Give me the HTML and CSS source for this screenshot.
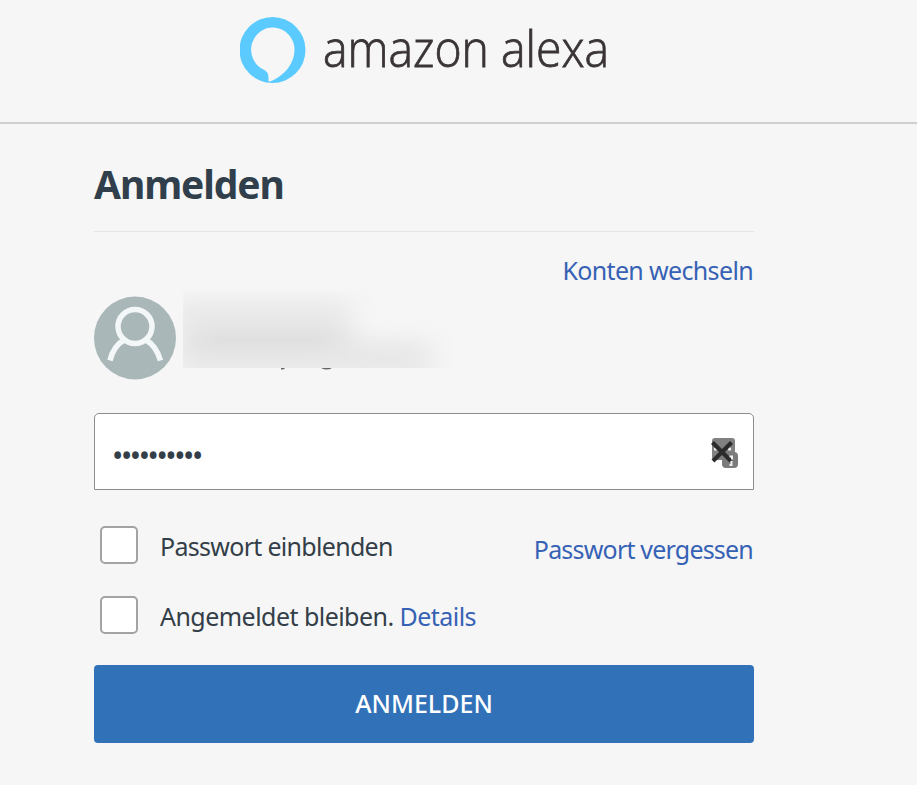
FILE: index.html
```html
<!DOCTYPE html>
<html lang="de">
<head>
    <meta charset="UTF-8">
    <meta name="viewport" content="width=device-width, initial-scale=1.0">
    <title>Amazon Alexa - Anmelden</title>
    <link rel="stylesheet" href="styles.css">
</head>
<body>
    <header class="header">
        <svg class="logo" width="400" height="90" viewBox="0 0 400 90">
            <circle cx="32.5" cy="34" r="33" fill="#5bcbff"/>
            <path class="logo-hole" d="M28.500 65.500 C28.500 59 29 57 23.500 53.500 A21.700 22 0 1 1 54.500 33.500 C54.500 48 44 60 30 65.500 Z"/>
            <text class="logo-text" x="83" y="51" textLength="286" lengthAdjust="spacingAndGlyphs">amazon alexa</text>
        </svg>
    </header>

    <main class="container">
        <h1>Anmelden</h1>
        <div class="switch"><a href="#">Konten wechseln</a></div>

        <div class="account">
            <svg class="avatar" width="82" height="84" viewBox="0 0 82 84">
                <ellipse cx="41" cy="42" rx="41" ry="41.5" fill="#aab7b8"/>
                <g fill="none" stroke="#f3f7f7" stroke-width="5.5">
                    <circle cx="41" cy="30.500" r="17"/>
                    <path d="M16 64.500 C18 56 23 48 30 44 M52 44 C59 48 64 56 66.500 64.500"/>
                </g>
            </svg>
            <!-- hidden account name -->
            <svg class="account-name" width="270" height="82" viewBox="0 0 270 82">
                <defs>
                    <filter id="soft" x="-30%" y="-60%" width="160%" height="220%">
                        <feGaussianBlur stdDeviation="14 10"/>
                    </filter>
                    <clipPath id="area"><rect width="270" height="77"/></clipPath>
                </defs>
                <g clip-path="url(#area)">
                    <g filter="url(#soft)">
                        <rect x="-10" y="8" width="178" height="80" fill="#e9e9e9"/>
                        <rect x="10" y="42" width="160" height="15" fill="#d9d9d9"/>
                        <rect x="150" y="48" width="98" height="42" fill="#e8e8e8"/>
                    </g>
                </g>
                <path d="M98 77 h4 q-1 2 -4 1.500 Z M138 77 h11 q-5 3 -11 0 Z" fill="#666"/>
            </svg>
        </div>

        <form>
            <div class="password">
                <input type="password" value="passwort12" aria-label="Passwort">
                <svg class="manager" width="28" height="32" viewBox="0 0 28 32">
                    <rect x="1" y="1" width="23" height="22" rx="3" fill="#818181"/>
                    <rect x="11" y="15" width="16" height="16" rx="4" fill="#7b7b7b"/>
                    <circle cx="4.500" cy="12" r="1.700" fill="#eee"/>
                    <circle cx="18.500" cy="12" r="1.700" fill="#eee"/>
                    <path d="M1.500 5.500 L20 24 M20.500 5.500 L2 24" stroke="#2b2b2b" stroke-width="4.200"/>
                    <path d="M18.500 19.500 h2.500 v3 M20.500 24 v4 h-2" fill="none" stroke="#eee" stroke-width="2"/>
                </svg>
            </div>

            <div class="row">
                <label class="option"><input type="checkbox"><span class="show">Passwort einblenden</span></label>
                <a class="forgot" href="#">Passwort vergessen</a>
            </div>
            <div class="row">
                <label class="option"><input type="checkbox"><span class="stay">Angemeldet bleiben. <a href="#">Details</a></span></label>
            </div>

            <button type="submit">ANMELDEN</button>
        </form>
    </main>
</body>
</html>
```

FILE: styles.css
```css
* {
    box-sizing: border-box;
}
body {
    margin: 0;
    min-height: 785px;
    background: #f6f6f6;
    color: #333e48;
    font-family: "Noto Sans", sans-serif;
    font-size: 25px;
    line-height: 36px;
    letter-spacing: -0.7px;
}
a {
    color: #3662b5;
    text-decoration: none;
}
svg {
    display: block;
    flex: none;
}
.header {
    height: 124px;
    padding: 16px 0 0 240px;
    border-bottom: 2px solid #cfcfcf;
}
.logo-hole {
    fill: #f6f6f6;
}
.logo-text {
    fill: #3a3436;
    stroke: #3a3436;
    stroke-width: 0.8px;
    font-family: "Open Sans", sans-serif;
    font-size: 50px;
    font-weight: 300;
    letter-spacing: 0;
}
.container {
    width: 660px;
    margin-left: 94px;
}
h1 {
    height: 108px;
    margin: 0;
    padding-top: 32px;
    border-bottom: 1px solid #e5e5e5;
    color: #303f4b;
    font-size: 39px;
    line-height: 56px;
    letter-spacing: -1.1px;
}
.switch {
    padding: 20px 1px 0 0;
    text-align: right;
    letter-spacing: -0.65px;
}
.account {
    display: flex;
    gap: 7px;
    height: 125px;
    padding-top: 3px;
}
.avatar {
    margin-top: 5px;
}
.password {
    display: flex;
    align-items: center;
    height: 77px;
    margin-bottom: 36px;
    padding: 0 14px 0 17px;
    background: #fff;
    border: 1px solid #8d8d8d;
    border-radius: 5px 5px 0 0;
}
.password input {
    flex: 1;
    height: 60px;
    padding: 8px 0 0;
    border: 0;
    outline: 0;
    background: none;
    color: #333e48;
    font-family: "Noto Sans", sans-serif;
    font-size: 30px;
    letter-spacing: -2.4px;
}
.manager {
    margin-top: 2px;
}
.row {
    display: flex;
    justify-content: space-between;
    height: 70px;
    padding-left: 6px;
}
.option {
    display: flex;
    gap: 22px;
}
.option input {
    appearance: none;
    width: 38px;
    height: 38px;
    margin: 0;
    background: #fff;
    border: 2px solid #a3a3a3;
    border-radius: 5px;
}
.option span {
    padding-top: 2px;
}
.option .stay {
    letter-spacing: -0.54px;
}
.forgot {
    padding: 5px 1px 0 0;
    letter-spacing: -0.8px;
}
button {
    display: block;
    width: 100%;
    height: 78px;
    margin-top: -1px;
    padding: 0 0 2px;
    border: 0;
    border-radius: 4px;
    background: #3071b8;
    color: #fff;
    font-family: "Noto Sans", sans-serif;
    font-size: 25px;
    font-weight: 500;
}
```
